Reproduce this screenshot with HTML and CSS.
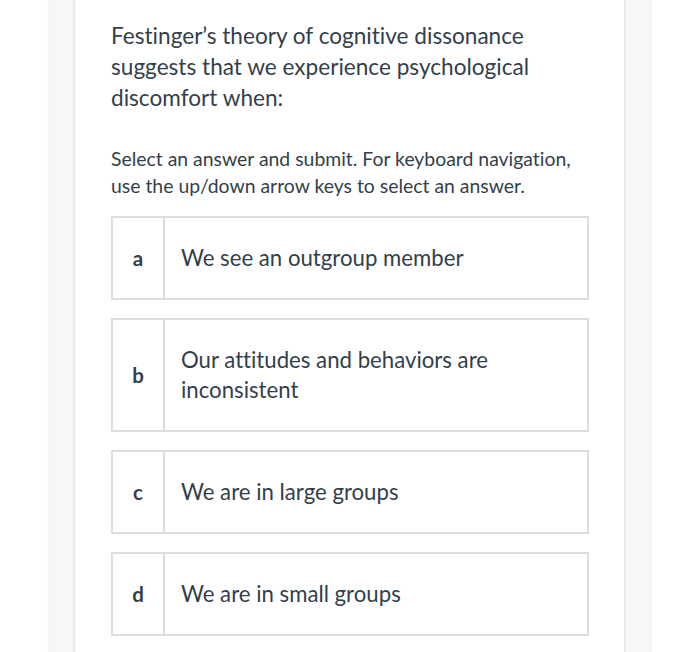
FILE: index.html
```html
<!DOCTYPE html>
<html>
<head>
<meta charset="utf-8">
<link rel="stylesheet" href="styles.css">
</head>
<body>
<div class="outer">
  <div class="card">
    <h1 class="question">Festinger’s theory of cognitive dissonance suggests that we experience psychological discomfort when:</h1>
    <p class="instructions">Select an answer and submit. For keyboard navigation, use the up/down arrow keys to select an answer.</p>
    <div class="options">
      <div class="option"><div class="letter">a</div><div class="text">We see an outgroup member</div></div>
      <div class="option"><div class="letter">b</div><div class="text">Our attitudes and behaviors are inconsistent</div></div>
      <div class="option"><div class="letter">c</div><div class="text">We are in large groups</div></div>
      <div class="option"><div class="letter">d</div><div class="text">We are in small groups</div></div>
    </div>
  </div>
</div>
</body>
</html>
```
FILE: styles.css
```css
html, body {
  margin: 0;
  padding: 0;
  background: #ffffff;
  height: 100%;
}
body {
  font-family: Lato, "Liberation Sans", sans-serif;
  font-variant-ligatures: none;
  color: #333f4a;
  overflow: hidden;
}
.outer {
  margin-left: 50px;
  width: 600px;
  min-height: 652px;
  background: #f7f7f7;
  box-shadow: -1px 0 2px rgba(0,0,0,0.08), 1px 0 2px rgba(0,0,0,0.08);
  padding: 0 26px 0 25px;
  box-sizing: border-box;
}
.card {
  background: #ffffff;
  min-height: 652px;
  box-shadow: -1px 0 2px rgba(0,0,0,0.10), 1px 0 2px rgba(0,0,0,0.10);
  padding: 20px 35px 0 36px;
}
.question {
  margin: 0;
  font-size: 22.6px;
  font-weight: 400;
  line-height: 31px;
}
.instructions {
  margin: 32px 0 0 0;
  font-size: 19.4px;
  line-height: 27px;
}
.options {
  margin-top: 17px;
  display: flex;
  flex-direction: column;
  gap: 18px;
}
.option {
  display: flex;
  border: 2px solid #dddddd;
}
.letter {
  width: 50px;
  flex: none;
  display: flex;
  align-items: center;
  justify-content: center;
  font-weight: 700;
  font-size: 20.5px;
  border-right: 2px solid #dddddd;
}
.text {
  padding: 25px 40px 25px 16px;
  font-size: 22.2px;
  line-height: 30px;
}
```
